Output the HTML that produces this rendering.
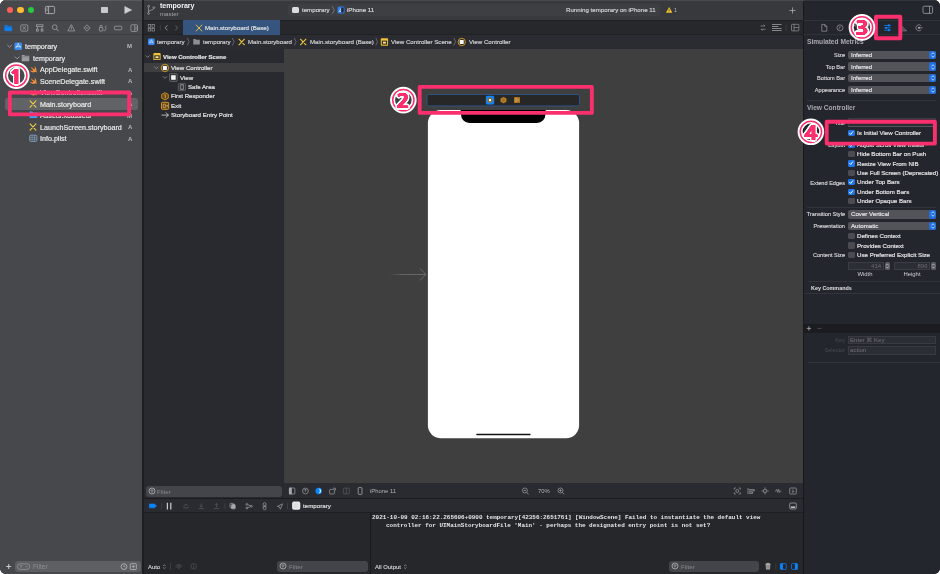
<!DOCTYPE html>
<html lang="en">
<head>
<meta charset="utf-8">
<title>Xcode — Main.storyboard</title>
<style>
*{box-sizing:border-box;margin:0;padding:0}
html,body{width:940px;height:574px;overflow:hidden;background:#fff}
body{font-family:"Liberation Sans","Noto Sans CJK JP",sans-serif;font-size:8px;color:#dfdfdf;position:relative;-webkit-font-smoothing:antialiased}
#win{position:absolute;left:0;top:0;width:940px;height:574px;border-radius:6px;overflow:hidden;background:#26272b}
.abs{position:absolute}
.t{position:absolute;white-space:nowrap;line-height:10px;height:10px;will-change:transform}
/* panes */
#sidebar{left:0;top:0;width:142px;height:574px;background:#47484c}
#sdiv{left:142px;top:0;width:2px;height:574px;background:#1e1e20}
#titlebar{left:144px;top:0;width:660px;height:20px;background:#38393d}
#tabbar{left:144px;top:20px;width:660px;height:15px;background:#27282c}
#jumpbar{left:144px;top:34.800px;width:660px;height:14.200px;background:#2b2c31}
#outline{left:144px;top:49px;width:140.500px;height:434px;background:#292a2f}
#canvas{left:284px;top:49px;width:520px;height:434px;background:#3f3f3f}
#obar{left:144px;top:483px;width:140.500px;height:15px;background:#292a2f}
#cbar{left:284px;top:483px;width:520px;height:15px;background:#2a2b30}
#dbar{left:144px;top:498px;width:660px;height:15px;background:#2a2b30;border-top:1px solid #1c1c1f;border-bottom:1px solid #1f1f22}
#debug{left:144px;top:513px;width:660px;height:61px;background:#26272b}
#ddiv{left:370px;top:513px;width:1px;height:61px;background:#1a1a1d}
#idiv{left:803px;top:0;width:1px;height:574px;background:#17181b}
#insp{left:804px;top:0;width:136px;height:574px;background:#24262d}
</style>
</head>
<body>
<div id="win">
<div id="sidebar" class="abs"></div>
<div id="sdiv" class="abs"></div>
<div id="titlebar" class="abs"></div>
<div id="tabbar" class="abs"></div>
<div id="jumpbar" class="abs"></div>
<div id="outline" class="abs"></div>
<div id="canvas" class="abs"></div>
<div id="obar" class="abs"></div>
<div id="cbar" class="abs"></div>
<div id="dbar" class="abs"></div>
<div id="debug" class="abs"></div>
<div id="ddiv" class="abs"></div>
<div id="idiv" class="abs"></div>
<div id="insp" class="abs"></div>
<!--SIDEBAR-->
<!-- traffic lights + toolbar (sidebar) -->
<div class="abs" style="left:0;top:0;width:142px;height:1px;background:#595a5e"></div>
<div class="abs" style="left:6.700px;top:6.700px;width:6.600px;height:6.600px;border-radius:50%;background:#fe5f57"></div>
<div class="abs" style="left:17.200px;top:6.700px;width:6.600px;height:6.600px;border-radius:50%;background:#febc2e"></div>
<div class="abs" style="left:27.600px;top:6.700px;width:6.600px;height:6.600px;border-radius:50%;background:#28c840"></div>
<svg class="abs" style="left:44px;top:5px" width="12" height="10" viewBox="0 0 12 10"><rect x="1.4" y="1.4" width="9.2" height="7.2" rx="1.2" fill="none" stroke="#bdbdc0" stroke-width="0.8"/><line x1="4.6" y1="1.4" x2="4.6" y2="8.6" stroke="#bdbdc0" stroke-width="0.8"/><line x1="2.4" y1="3" x2="3.7" y2="3" stroke="#bdbdc0" stroke-width="0.6"/><line x1="2.4" y1="4.3" x2="3.7" y2="4.3" stroke="#bdbdc0" stroke-width="0.6"/><line x1="2.4" y1="5.6" x2="3.7" y2="5.6" stroke="#bdbdc0" stroke-width="0.6"/></svg>
<div class="abs" style="left:101px;top:6.8px;width:6.8px;height:6.6px;border-radius:0.8px;background:#c9c9cb"></div>
<svg class="abs" style="left:124px;top:6px" width="9" height="8" viewBox="0 0 9 8"><path d="M0.8 0.5 L7.6 4 L0.8 7.5 Z" fill="#cfcfd1" stroke="#cfcfd1" stroke-width="0.6" stroke-linejoin="round"/></svg>
<div class="abs" style="left:0;top:20px;width:142px;height:1px;background:#3c3d41"></div>
<!-- navigator selector icons -->
<svg class="abs" style="left:0;top:21px" width="142" height="14" viewBox="0 0 142 14" fill="none" stroke="#a9a9ad" stroke-width="0.7">
 <path d="M4.8 4.4 h2.6 l0.8 0.8 h3.6 v4.6 h-7 z" fill="#0a84ff" stroke="#0a84ff" stroke-width="0.5" stroke-linejoin="round"/><rect x="4.8" y="5.7" width="7" height="0.5" fill="#47484c" stroke="none"/>
 <rect x="20.8" y="3.9" width="7" height="6.2" rx="0.8"/><path d="M22.6 5.4 l3.4 3.2 M26 5.4 l-3.4 3.2"/>
 <rect x="36.4" y="3.8" width="6.6" height="1.8" /><rect x="36.4" y="8.2" width="1.9" height="1.9"/><rect x="41.1" y="8.2" width="1.9" height="1.9"/><path d="M37.4 5.6 v2.6 M42 5.6 v2.6"/>
 <circle cx="54.7" cy="6.2" r="2.4"/><path d="M56.5 8 l2 2.1" stroke-width="0.9"/>
 <path d="M71.3 3.6 l3.5 6.3 h-7 z" stroke-linejoin="round"/><path d="M71.3 5.6 v2.2 M71.3 8.5 v0.6" stroke-width="0.8"/>
 <path d="M87 3.8 l3.2 3.2 l-3.2 3.2 l-3.2 -3.2 z" stroke-linejoin="round"/><path d="M85.6 7 h2.8"/>
 <rect x="99.4" y="6.4" width="3.4" height="3.6" rx="0.5"/><path d="M100 6.4 v-1 a1.1 1.1 0 0 1 2.2 0 v1"/><path d="M103.6 9.6 h1.6 l0.6 -0.6 v-4.6" stroke-width="0.6"/>
 <rect x="114.4" y="5.2" width="7.4" height="3.6" rx="0.9"/>
 <rect x="130.9" y="3.8" width="6.6" height="6.6" rx="0.8"/><path d="M134.6 3.8 v6.6 M134.6 6.2 h2.9 M134.6 8.2 h2.9" stroke-width="0.6"/>
</svg>
<div class="abs" style="left:0;top:34px;width:142px;height:1px;background:#3d3e42"></div>
<!-- selected row -->
<div class="abs" style="left:5px;top:98.3px;width:132.6px;height:11.4px;border-radius:2.5px;background:#626367"></div>
<!-- tree -->
<style>
.sb{font-size:7.15px;color:#ececec;-webkit-text-stroke:0.18px #ececec}
.st{font-size:6px;color:#b9b9bc;font-weight:bold}
</style>
<svg class="abs" style="left:0;top:40px" width="142" height="106" viewBox="0 40 142 106" fill="none">
 <path d="M7.6 45.2 l2 2 l2 -2" stroke="#a9a9ad" stroke-width="0.8" stroke-linecap="round" stroke-linejoin="round"/>
 <path d="M15.1 56.9 l2 2 l2 -2" stroke="#a9a9ad" stroke-width="0.8" stroke-linecap="round" stroke-linejoin="round"/>
 <!-- project icon -->
 <rect x="14.4" y="42.4" width="7.6" height="7.6" rx="1.5" fill="#3b8cf0"/>
 <path d="M18.2 43.8 l-2.2 3.9 M18.2 43.8 l2.2 3.9 M16.1 46.6 h4.2" stroke="#dbe9fb" stroke-width="0.7" stroke-linecap="round"/>
 <!-- folder -->
 <path d="M21.7 54.9 h2.6 l0.7 0.8 h4.3 v5.6 h-7.6 z" fill="#9a9ba0"/><rect x="21.7" y="56.6" width="7.6" height="0.5" fill="#6d6e73"/>
 <!-- swift icons -->
 <g fill="#f5943c">
  <path transform="translate(28.410 64.400) scale(0.412)" d="M13.543 3.41c4.114 2.47 6.545 7.162 5.549 11.131-.024.093-.05.181-.076.272l.002.001c2.062 2.538 1.5 5.258 1.236 4.745-1.072-2.086-3.066-1.568-4.088-1.043a6.803 6.803 0 0 1-.281.158l-.02.012-.002.002c-2.115 1.123-4.957 1.205-7.812-.022a12.568 12.568 0 0 1-5.640-4.838c.649.48 1.350.902 2.097 1.252 3.019 1.414 6.051 1.311 8.197-.002C9.651 12.730 7.101 9.670 5.146 7.191a10.628 10.628 0 0 1-1.005-1.384c2.340 2.142 6.038 4.830 7.365 5.576C8.690 8.408 6.208 4.743 6.324 4.860c4.436 4.470 8.528 6.996 8.528 6.996.154.085.270.154.360.213.085-.215.160-.437.224-.668.708-2.588-.090-5.548-1.893-7.992z"/>
  <path transform="translate(28.410 75.900) scale(0.412)" d="M13.543 3.41c4.114 2.47 6.545 7.162 5.549 11.131-.024.093-.05.181-.076.272l.002.001c2.062 2.538 1.5 5.258 1.236 4.745-1.072-2.086-3.066-1.568-4.088-1.043a6.803 6.803 0 0 1-.281.158l-.02.012-.002.002c-2.115 1.123-4.957 1.205-7.812-.022a12.568 12.568 0 0 1-5.640-4.838c.649.48 1.350.902 2.097 1.252 3.019 1.414 6.051 1.311 8.197-.002C9.651 12.730 7.101 9.670 5.146 7.191a10.628 10.628 0 0 1-1.005-1.384c2.340 2.142 6.038 4.830 7.365 5.576C8.690 8.408 6.208 4.743 6.324 4.860c4.436 4.470 8.528 6.996 8.528 6.996.154.085.270.154.360.213.085-.215.160-.437.224-.668.708-2.588-.090-5.548-1.893-7.992z"/>
  <path transform="translate(28.410 87.400) scale(0.412)" d="M13.543 3.41c4.114 2.47 6.545 7.162 5.549 11.131-.024.093-.05.181-.076.272l.002.001c2.062 2.538 1.5 5.258 1.236 4.745-1.072-2.086-3.066-1.568-4.088-1.043a6.803 6.803 0 0 1-.281.158l-.02.012-.002.002c-2.115 1.123-4.957 1.205-7.812-.022a12.568 12.568 0 0 1-5.640-4.838c.649.48 1.350.902 2.097 1.252 3.019 1.414 6.051 1.311 8.197-.002C9.651 12.730 7.101 9.670 5.146 7.191a10.628 10.628 0 0 1-1.005-1.384c2.340 2.142 6.038 4.830 7.365 5.576C8.690 8.408 6.208 4.743 6.324 4.860c4.436 4.470 8.528 6.996 8.528 6.996.154.085.270.154.360.213.085-.215.160-.437.224-.668.708-2.588-.090-5.548-1.893-7.992z"/>
 </g>
 <!-- storyboard icons -->
 <g stroke="#f1cc3b" stroke-width="1.150" stroke-linecap="round">
  <path d="M30.100 100.900 l5.800 6.200 M35.900 100.900 l-5.800 6.200"/>
  <path transform="translate(0 23)" d="M30.100 100.900 l5.800 6.200 M35.900 100.900 l-5.800 6.200"/>
 </g>
 <!-- assets -->
 <path d="M29.6 111.600 h2.600 l0.700 0.800 h4.300 v5.600 h-7.600 z" fill="#3fa2f7"/>
 <!-- plist -->
 <rect x="29.700" y="135.200" width="7.2" height="6.2" rx="0.9" stroke="#8fb4d8" stroke-width="0.7"/><path d="M29.700 137.300 h7.200 M29.700 139.300 h7.200 M32.100 135.200 v6.200 M34.500 135.200 v6.200" stroke="#8fb4d8" stroke-width="0.5"/>
</svg>
<div class="t sb" style="left:25.4px;top:41.8px">temporary</div>
<div class="t sb" style="left:32.6px;top:53.5px">temporary</div>
<div class="t sb" style="left:40px;top:65.0px">AppDelegate.swift</div>
<div class="t sb" style="left:40px;top:76.5px">SceneDelegate.swift</div>
<div class="t sb" style="left:40px;top:88.0px">ViewController.swift</div>
<div class="t sb" style="left:40px;top:99.5px">Main.storyboard</div>
<div class="t sb" style="left:40px;top:111.0px">Assets.xcassets</div>
<div class="t sb" style="left:40px;top:122.5px">LaunchScreen.storyboard</div>
<div class="t sb" style="left:40px;top:134.0px">Info.plist</div>
<div class="t st" style="left:127px;top:41.3px">M</div>
<div class="t st" style="left:127.600px;top:64.5px">A</div>
<div class="t st" style="left:127.600px;top:76.0px">A</div>
<div class="t st" style="left:127.600px;top:87.5px">A</div>
<div class="t st" style="left:127.600px;top:99.0px">A</div>
<div class="t st" style="left:127px;top:110.5px">M</div>
<div class="t st" style="left:127.600px;top:122.0px">A</div>
<div class="t st" style="left:127.600px;top:133.5px">A</div>
<!-- sidebar bottom filter -->
<div class="abs" style="left:14.6px;top:561px;width:126px;height:11px;border-radius:3px;background:#5e5f63"></div>
<svg class="abs" style="left:4px;top:560px" width="138" height="13" viewBox="4 560 138 13" fill="none">
 <path d="M6.200 566.500 h5 M8.700 564 v5" stroke="#d6d6d8" stroke-width="0.9"/>
 <rect x="17.300" y="563.800" width="12.400" height="5.600" rx="2.800" stroke="#9c9ca0" stroke-width="0.7"/>
 <path d="M19.600 565.300 h3 M20.100 566.500 h2 M20.600 567.700 h1" stroke="#9c9ca0" stroke-width="0.5"/><path d="M25.200 566 l1.100 1.100 l1.100 -1.100" stroke="#9c9ca0" stroke-width="0.6"/>
 <circle cx="124" cy="566.600" r="2.900" stroke="#c6c6c9" stroke-width="0.7"/><path d="M124 564.800 v1.900 h1.400" stroke="#c6c6c9" stroke-width="0.6"/>
 <rect x="130.300" y="563.700" width="6" height="5.800" rx="0.800" stroke="#c6c6c9" stroke-width="0.7"/><path d="M131.700 566.600 h3.200 M133.300 565 v3.200" stroke="#c6c6c9" stroke-width="0.6"/>
</svg>
<div class="t" style="left:32.5px;top:561.6px;font-size:6.6px;color:#8f8f93">Filter</div>
<!--/SIDEBAR-->
<!--TOP-->
<style>
.tb{font-size:6.15px;color:#d4d4d6;-webkit-text-stroke:0.18px #d4d4d6}
.jb{font-size:6.15px;color:#cfcfd2;-webkit-text-stroke:0.18px #cfcfd2}
.ol{font-size:6.15px;color:#e2e2e4;-webkit-text-stroke:0.2px #e2e2e4}
</style>
<!-- title bar -->
<div class="abs" style="left:287.500px;top:4px;width:372.500px;height:12.400px;border-radius:3px;background:#3e3f43"></div>
<div class="abs" style="left:144px;top:0;width:660px;height:1px;background:#48494d"></div>
<svg class="abs" style="left:145px;top:3px" width="14" height="14" viewBox="145 3 14 14" fill="none" stroke="#b9b9bd" stroke-width="0.6">
 <circle cx="148.600" cy="6.200" r="0.900"/><circle cx="148.600" cy="13.400" r="0.900"/><circle cx="153.800" cy="7.600" r="0.900"/><path d="M148.600 7.100 v5.400 M153.800 8.500 c0 2 -5.200 1.200 -5.200 3.200"/>
</svg>
<div class="t" style="left:160.3px;top:1.2px;font-size:7.050px;font-weight:bold;color:#f4f4f5">temporary</div>
<div class="t" style="left:160.3px;top:8.9px;font-size:6.100px;color:#a6a6aa">master</div>
<div class="abs" style="left:292px;top:6.600px;width:6.800px;height:6.800px;border-radius:1.500px;background:#dcdcde"></div>
<div class="t tb" style="left:301.8px;top:5px">temporary</div>
<svg class="abs" style="left:331px;top:5px" width="5" height="10" viewBox="0 0 5 10" fill="none" stroke="#8e8e92" stroke-width="0.6"><path d="M1.200 1.200 l2.200 3.800 l-2.200 3.800"/></svg>
<svg class="abs" style="left:336.500px;top:6px" width="8" height="8" viewBox="0 0 8 8"><rect x="0.500" y="0.500" width="7" height="7" rx="1.600" fill="#2f7fe6"/><path d="M2 6 l2.500 -4 M3 6 l3 -3" stroke="#e8f1fd" stroke-width="0.800"/><rect x="4.200" y="1.400" width="2.400" height="5.200" rx="0.500" fill="#1d2433"/></svg>
<div class="t tb" style="left:347px;top:5px">iPhone 11</div>
<div class="t tb" style="left:566px;top:5px;color:#c9c9cc">Running temporary on iPhone 11</div>
<svg class="abs" style="left:666px;top:6.800px" width="6.300" height="6.300" viewBox="0 0 7 7"><path d="M3.500 0.600 l3.100 5.600 h-6.200 z" fill="#f5c52f" stroke="#f5c52f" stroke-width="0.600" stroke-linejoin="round"/><path d="M3.500 2.400 v2 M3.500 5.100 v0.500" stroke="#3a3000" stroke-width="0.700"/></svg>
<div class="t" style="left:674px;top:5px;font-size:5.600px;color:#b5b5b9">1</div>
<svg class="abs" style="left:789px;top:6.500px" width="7" height="7" viewBox="0 0 7 7"><path d="M0.500 3.500 h6 M3.500 0.500 v6" stroke="#b7b7bb" stroke-width="0.700"/></svg>
<!-- tab bar -->
<div class="abs" style="left:144px;top:19.500px;width:660px;height:0.900px;background:#1f2023"></div>
<div class="abs" style="left:144px;top:34.300px;width:660px;height:0.700px;background:#202125"></div>
<svg class="abs" style="left:147px;top:23px" width="34" height="10" viewBox="147 23 34 10" fill="none" stroke="#a2a2a6" stroke-width="0.600">
 <rect x="148.200" y="24.600" width="2.600" height="2.600"/><rect x="152" y="24.600" width="2.600" height="2.600"/><rect x="148.200" y="28.400" width="2.600" height="2.600"/><rect x="152" y="28.400" width="2.600" height="2.600"/>
 <path d="M160.300 25 v5.400" stroke="#4a4b50"/>
 <path d="M167.400 25.300 l-2.200 2.500 l2.200 2.500" stroke="#b5b5b9" stroke-width="0.700"/>
 <path d="M175.400 25.300 l2.200 2.500 l-2.200 2.500" stroke="#737378" stroke-width="0.700"/>
</svg>
<div class="abs" style="left:183px;top:20.200px;width:96.800px;height:14.600px;background:#35557f"></div>
<svg class="abs" style="left:195px;top:24px" width="8" height="8" viewBox="0 0 8 8"><path d="M1.200 1 l5.600 6 M6.800 1 l-5.600 6" stroke="#f1cc3b" stroke-width="0.900" stroke-linecap="round"/></svg>
<div class="t tb" style="left:205px;top:22.800px;color:#f1f1f3">Main.storyboard (Base)</div>
<svg class="abs" style="left:756px;top:22px" width="46" height="11" viewBox="756 22 46 11" fill="none" stroke="#a8a8ac" stroke-width="0.600">
 <path d="M760.500 26 h4.500 l-1.300 -1.300 M765.500 29.300 h-4.500 l1.300 1.300"/>
 <path d="M772 24.500 h9.600 M772 26.500 h6.400 M772 28.500 h9.600 M772 30.500 h9.600" stroke="#8f8f94" stroke-width="0.900"/>
 <path d="M786 24.500 v6.500" stroke="#4a4b50"/>
 <rect x="791.500" y="24.300" width="7.400" height="6.600" rx="0.900"/><path d="M794 24.300 v6.600 M794 27.600 h4.900"/>
</svg>
<!-- jump bar -->
<svg class="abs" style="left:144px;top:36px" width="380" height="12" viewBox="144 36 380 12" fill="none">
 <rect x="148" y="38.400" width="6.600" height="6.600" rx="1.300" fill="#3b8cf0"/><path d="M151.300 39.700 l-1.800 3.300 M151.300 39.700 l1.800 3.300 M149.600 42.200 h3.400" stroke="#dbe9fb" stroke-width="0.600"/>
 <g stroke="#8a8a8f" stroke-width="0.600"><path d="M187.300 38 l1.800 3.700 l-1.800 3.700"/><path transform="translate(45 0)" d="M187.300 38 l1.800 3.700 l-1.800 3.700"/><path transform="translate(107 0)" d="M187.300 38 l1.800 3.700 l-1.800 3.700"/><path transform="translate(188.500 0)" d="M187.300 38 l1.800 3.700 l-1.800 3.700"/><path transform="translate(266.500 0)" d="M187.300 38 l1.800 3.700 l-1.800 3.700"/></g>
 <path d="M193.300 39 h2.200 l0.600 0.700 h3.700 v4.900 h-6.500 z" fill="#8e8f94"/>
 <g stroke="#f1cc3b" stroke-width="1.050" stroke-linecap="round"><path d="M239 39.200 l5.400 5.600 M244.400 39.200 l-5.400 5.600"/><path transform="translate(61.500 0)" d="M239 39.200 l5.400 5.600 M244.400 39.200 l-5.400 5.600"/></g>
 <rect x="380.800" y="38.200" width="7.300" height="7.500" rx="0.900" fill="#f1c33a"/><rect x="381.800" y="40.600" width="5.300" height="4.100" fill="#3a3320"/><rect x="383" y="41.700" width="2.900" height="1.900" fill="#f7e3a0"/>
 <circle cx="461.700" cy="42" r="3.700" fill="#2a2b30" stroke="#d9a01f" stroke-width="0.900"/><rect x="459.700" y="40" width="4" height="4" rx="0.400" fill="#fafafa"/>
</svg>
<div class="t jb" style="left:157.300px;top:37.200px">temporary</div>
<div class="t jb" style="left:202.600px;top:37.200px">temporary</div>
<div class="t jb" style="left:247.800px;top:37.200px">Main.storyboard</div>
<div class="t jb" style="left:309.800px;top:37.200px">Main.storyboard (Base)</div>
<div class="t jb" style="left:391px;top:37.200px">View Controller Scene</div>
<div class="t jb" style="left:468.800px;top:37.200px">View Controller</div>
<!--/TOP-->
<!--OUTLINE-->
<!-- outline -->
<div class="abs" style="left:144px;top:63.300px;width:140px;height:9.200px;background:#3e3e41"></div>
<svg class="abs" style="left:144px;top:50px" width="140" height="72" viewBox="144 50 140 72" fill="none">
 <g stroke="#9b9ba0" stroke-width="0.750" stroke-linecap="round" stroke-linejoin="round">
  <path d="M146 55.700 l1.700 1.700 l1.700 -1.700"/><path d="M154.600 67 l1.700 1.700 l1.700 -1.700"/><path d="M163.300 76.600 l1.700 1.700 l1.700 -1.700"/>
 </g>
 <rect x="153.400" y="53.100" width="7.200" height="7" rx="0.900" fill="#f1c33a"/><rect x="154.300" y="55.300" width="5.400" height="3.900" fill="#3a3320"/><rect x="155.500" y="56.300" width="3" height="1.900" fill="#f7e3a0"/>
 <circle cx="164.900" cy="67.900" r="3.700" fill="#3e3e41" stroke="#d9a01f" stroke-width="0.900"/><rect x="162.900" y="65.900" width="4" height="4" rx="0.400" fill="#fafafa"/>
 <rect x="169.600" y="73.700" width="7.600" height="7.600" rx="0.700" stroke="#8f8f94" stroke-width="0.600"/><rect x="171.100" y="75.200" width="4.600" height="4.600" fill="#f4f4f4"/>
 <rect x="178.300" y="83.400" width="7.200" height="7.200" rx="0.800" stroke="#77787d" stroke-width="0.600"/><rect x="180.200" y="84.500" width="3.400" height="5" rx="0.500" stroke="#b9b9bd" stroke-width="0.600"/><path d="M180.200 85.800 h3.400 M180.200 88.200 h3.400" stroke="#b9b9bd" stroke-width="0.400"/>
 <path d="M161.700 94.400 l3.300 -1.700 l3.300 1.700 v3.800 l-3.300 1.700 l-3.300 -1.700 z" fill="#6a4610" stroke="#e3a12c" stroke-width="0.800" stroke-linejoin="round"/><path d="M164.300 94.800 h1 v3.400" stroke="#f0c878" stroke-width="0.700"/>
 <rect x="161.500" y="102.300" width="7.200" height="7" rx="0.900" fill="#6a4610" stroke="#e3a12c" stroke-width="0.900"/><path d="M163.300 104.200 h2 v3.300 h-2 z" stroke="#f3d9a4" stroke-width="0.500"/><path d="M165.600 105.800 h2 M166.900 104.900 l0.900 0.900 l-0.900 0.900" stroke="#f3d9a4" stroke-width="0.500"/>
 <path d="M161.900 115.100 h6.400 M166 112.800 l2.400 2.300 l-2.400 2.300" stroke="#dcdcdf" stroke-width="0.800" stroke-linecap="round" stroke-linejoin="round"/>
</svg>
<div class="t ol" style="left:163px;top:51.700px;font-size:6px;font-weight:bold;color:#e4e4e6">View Controller Scene</div>
<div class="t ol" style="left:171px;top:63px">View Controller</div>
<div class="t ol" style="left:179.600px;top:72.600px">View</div>
<div class="t ol" style="left:187.700px;top:82.100px">Safe Area</div>
<div class="t ol" style="left:171px;top:91.400px">First Responder</div>
<div class="t ol" style="left:171px;top:100.800px">Exit</div>
<div class="t ol" style="left:171px;top:110.100px">Storyboard Entry Point</div>
<!-- outline filter -->
<div class="abs" style="left:145.600px;top:486px;width:136px;height:10.600px;border-radius:3px;background:#44454a"></div>
<svg class="abs" style="left:147.600px;top:487.400px" width="8" height="8" viewBox="0 0 8 8" fill="none"><circle cx="4" cy="4" r="3" stroke="#cdcdd0" stroke-width="0.650"/><path d="M2.400 3 h3.200 M2.900 4.100 h2.200 M3.500 5.200 h1" stroke="#cdcdd0" stroke-width="0.550"/></svg>
<div class="t" style="left:157px;top:486.500px;font-size:6.200px;color:#8a8a8f">Filter</div>
<!--/OUTLINE-->
<!--CANVAS-->
<!-- canvas -->
<svg class="abs" style="left:284px;top:49px" width="520" height="434" viewBox="284 49 520 434" fill="none">
 <!-- entry arrow -->
 <linearGradient id="ag" x1="389" y1="0" x2="426" y2="0" gradientUnits="userSpaceOnUse"><stop offset="0" stop-color="#3f3f3f"/><stop offset="0.350" stop-color="#6a6a6c"/><stop offset="1" stop-color="#767678"/></linearGradient>
 <rect x="389" y="274" width="37" height="0.800" fill="url(#ag)"/><path d="M419.800 268.400 l6.200 6 l-6.200 6" stroke="#737375" stroke-width="0.800"/>
 <!-- phone -->
 <rect x="427.900" y="110.100" width="151.200" height="328.100" rx="13" fill="#ffffff"/>
 <path d="M459.800 110.100 h86.800 a1.200 1.200 0 0 0 -1.200 1.200 v3.200 a8.400 8.400 0 0 1 -8.400 8.400 h-67.600 a8.400 8.400 0 0 1 -8.400 -8.400 v-3.200 a1.200 1.200 0 0 0 -1.200 -1.200 z" fill="#000"/>
 <rect x="476.200" y="433.700" width="54.400" height="1.500" rx="0.750" fill="#111"/>
 <!-- scene dock -->
 <rect x="427.100" y="94.500" width="152.300" height="11.400" rx="1.500" fill="#272728" stroke="#2c5b96" stroke-width="0.800"/>
 <rect x="485.800" y="95.800" width="8.400" height="8.700" rx="1.600" fill="#0a84ff"/>
 <circle cx="490" cy="100.150" r="2.500" fill="#6f5a1e" stroke="#a78a2e" stroke-width="0.600"/><rect x="488.900" y="99.050" width="2.200" height="2.200" rx="0.300" fill="#fff"/>
 <path d="M500.800 98.600 l2.700 -1.400 l2.700 1.400 v3.100 l-2.700 1.400 l-2.700 -1.400 z" fill="#b87f26" stroke="#c98c2b" stroke-width="0.400"/><path d="M502.600 99.300 h1.800 v1.800 h-1.800 z" stroke="#7a5316" stroke-width="0.400"/>
 <rect x="514" y="97.100" width="6" height="6" rx="0.600" fill="#a9711f"/><path d="M515.300 98.600 h1.500 v3 h-1.500 z M517.300 100.100 h1.800 M518.300 99.300 l0.800 0.800 l-0.800 0.800" stroke="#e3c48e" stroke-width="0.450"/>
</svg>
<!--/CANVAS-->
<!--BOTTOM-->
<!-- canvas bottom bar -->
<svg class="abs" style="left:284px;top:484px" width="520" height="14" viewBox="284 484 520 14" fill="none" stroke="#a9a9ad" stroke-width="0.650">
 <rect x="289.300" y="488" width="5.600" height="6" rx="0.800"/><rect x="289.300" y="488" width="2.200" height="6" fill="#a9a9ad"/>
 <circle cx="305.400" cy="491" r="2.900"/><path d="M305.400 489.200 v2.600 M304.200 490.300 l1.200 -1.200 l1.200 1.200" stroke-width="0.600"/>
 <circle cx="318.700" cy="491" r="3" fill="#0a84ff" stroke="#0a84ff"/><path d="M318.700 488.600 a2.400 2.400 0 0 1 0 4.800 a3.400 3.400 0 0 0 0 -4.800 z" fill="#e7f1ff" stroke="none"/>
 <rect x="329.600" y="489.400" width="4.800" height="4.600" rx="0.700"/><path d="M333.200 488.200 h2.200 v2.200" />
 <rect x="343.300" y="488.100" width="6" height="5.800" rx="0.800" stroke="#5d5e63"/><path d="M346.300 488.100 v5.800" stroke="#5d5e63"/>
 <rect x="358.200" y="487.600" width="3.800" height="6.800" rx="0.800" stroke="#c4c4c7"/>
 <circle cx="524.900" cy="490.500" r="2.500"/><path d="M526.700 492.400 l1.900 2 M523.700 490.500 h2.400" stroke-width="0.700"/>
 <circle cx="560.500" cy="490.500" r="2.500"/><path d="M562.300 492.400 l1.900 2 M559.300 490.500 h2.400 M560.500 489.300 v2.400" stroke-width="0.700"/>
 <circle cx="737.300" cy="491" r="1.500"/><path d="M734.300 489.500 v-1.500 h1.500 M738.800 488 h1.500 v1.500 M740.300 492.500 v1.500 h-1.500 M735.800 494 h-1.500 v-1.500"/>
 <path d="M748 488 v6.200 M749 489.600 h5.400 v1.400 h-5.400 M749 492 h3.600 v1.400 h-3.600"/>
 <rect x="763.700" y="489.700" width="2.600" height="2.600"/><path d="M765 487.400 v1.500 M765 493.100 v1.500 M761.400 491 h1.500 M767.100 491 h1.500"/>
 <path d="M775 491 h1 l0.900 -1.700 l0.900 3.200 l0.900 -3.200 l0.900 3.200 l0.900 -1.500 h1" stroke-width="0.550"/>
 <rect x="789.700" y="488" width="6.600" height="6" rx="0.800"/><path d="M793 489.300 v3 M791.700 491.100 l1.300 1.300 l1.300 -1.300" stroke-width="0.600"/>
</svg>
<div class="t" style="left:370.300px;top:486px;font-size:5.900px;color:#b0b0b4">iPhone 11</div>
<div class="t" style="left:537.600px;top:486px;font-size:5.900px;color:#b0b0b4">70%</div>
<!-- debug bar -->
<svg class="abs" style="left:144px;top:499px" width="660" height="14" viewBox="144 499 660 14" fill="none" stroke="#a9a9ad" stroke-width="0.650">
 <path d="M149.400 504 h5 l2.100 1.900 l-2.100 1.900 h-5 z" fill="#0a84ff" stroke="#0a84ff" stroke-linejoin="round"/>
 <path d="M167.400 502.700 v6.800 M170.800 502.700 v6.800" stroke="#c9c9cc" stroke-width="1.250"/>
 <path d="M183.300 507.800 h5.400 M183.600 506 l2.400 -1.800 l2.400 1.800" stroke="#5f6065"/>
 <path d="M198.500 508.600 h5.400 M201.200 503.400 v3.600 M199.900 505.800 l1.300 1.300 l1.300 -1.300" stroke="#5f6065"/>
 <path d="M213.800 508.600 h5.400 M216.500 507.400 v-3.800 M215.200 504.800 l1.300 -1.300 l1.300 1.300" stroke="#5f6065"/>
 <rect x="230" y="503.400" width="3.800" height="4.200" rx="0.600"/><rect x="231.400" y="504.600" width="3.800" height="4.200" rx="0.600" fill="#a9a9ad"/>
 <circle cx="246.800" cy="504.400" r="0.900"/><circle cx="246.800" cy="508" r="0.900"/><circle cx="251.400" cy="506.200" r="0.900"/><path d="M247.700 504.600 l2.800 1.300 M247.700 507.800 l2.800 -1.300"/>
 <circle cx="264.600" cy="504.200" r="1.500"/><circle cx="264.600" cy="508.200" r="1.500"/><path d="M262.600 506.200 h4"/>
 <path d="M277.400 506.400 l5.200 -2.600 l-2.200 5.400 l-0.900 -2.200 z" stroke-linejoin="round"/>
 <path d="M287.500 503.200 v6 M161.700 503.200 v6 M225 503.200 v6" stroke="#47484d"/>
 <rect x="292.100" y="501.600" width="8.200" height="8.200" rx="1.800" fill="#e6e6e8" stroke="none"/><path d="M294 504.300 h4.400 M294 505.700 h4.400 M294 507.100 h4.400 M295.500 503 v5.400 M296.900 503 v5.400" stroke="#cfcfd2" stroke-width="0.300"/>
 <rect x="789.700" y="503" width="6.600" height="6" rx="1" stroke="#bdbdc1"/><rect x="790.800" y="506.400" width="4.400" height="1.600" fill="#bdbdc1" stroke="none"/>
</svg>
<div class="t" style="left:302.900px;top:500.900px;font-size:6.200px;color:#e2e2e4;-webkit-text-stroke:0.15px #e2e2e4">temporary</div>
<!-- console -->
<div class="t" style="left:371.800px;top:513.200px;font-family:'Liberation Mono',monospace;font-weight:bold;font-size:5.940px;color:#e6e6e8">2021-10-09 02:16:22.265606+0900 temporary[42356:2651761] [WindowScene] Failed to instantiate the default view</div>
<div class="t" style="left:385.800px;top:520.900px;font-family:'Liberation Mono',monospace;font-weight:bold;font-size:5.940px;color:#e6e6e8">controller for UIMainStoryboardFile 'Main' - perhaps the designated entry point is not set?</div>
<!-- debug bottom -->
<div class="t" style="left:147.600px;top:561.600px;font-size:5.900px;color:#d0d0d3;-webkit-text-stroke:0.15px #d0d0d3">Auto</div>
<svg class="abs" style="left:161.600px;top:563px" width="5" height="8" viewBox="0 0 5 8" fill="none" stroke="#c4c4c8" stroke-width="0.600"><path d="M1.200 2.900 l1.100 -1.100 l1.100 1.100 M1.200 4.500 l1.100 1.100 l1.100 -1.100"/></svg>
<div class="abs" style="left:169.500px;top:563px;width:0.600px;height:7px;background:#3d3e43"></div>
<svg class="abs" style="left:174px;top:562px" width="26" height="9" viewBox="174 562 26 9" fill="none" stroke="#595a5f" stroke-width="0.600">
 <path d="M175.800 566.300 c1.600 -2.400 4.400 -2.400 6 0 c-1.600 2.400 -4.400 2.400 -6 0 z"/><circle cx="178.800" cy="566.300" r="0.900"/>
 <circle cx="193.600" cy="566.300" r="2.700"/><path d="M193.600 565.800 v2 M193.600 564.600 v0.500" stroke-width="0.700"/>
</svg>
<div class="abs" style="left:277.300px;top:561px;width:90.400px;height:10.800px;border-radius:3px;background:#44454a"></div>
<svg class="abs" style="left:279.300px;top:562.400px" width="8" height="8" viewBox="0 0 8 8" fill="none"><circle cx="4" cy="4" r="3" stroke="#cdcdd0" stroke-width="0.650"/><path d="M2.400 3 h3.200 M2.900 4.100 h2.200 M3.500 5.200 h1" stroke="#cdcdd0" stroke-width="0.550"/></svg>
<div class="t" style="left:289px;top:561.500px;font-size:6.200px;color:#8a8a8f">Filter</div>
<div class="t" style="left:374.900px;top:561.600px;font-size:5.900px;color:#d0d0d3;-webkit-text-stroke:0.15px #d0d0d3">All Output</div>
<svg class="abs" style="left:402.600px;top:563px" width="5" height="8" viewBox="0 0 5 8" fill="none" stroke="#c4c4c8" stroke-width="0.600"><path d="M1.200 2.900 l1.100 -1.100 l1.100 1.100 M1.200 4.500 l1.100 1.100 l1.100 -1.100"/></svg>
<div class="abs" style="left:669.400px;top:561px;width:89.400px;height:10.800px;border-radius:3px;background:#44454a"></div>
<svg class="abs" style="left:671.300px;top:562.400px" width="8" height="8" viewBox="0 0 8 8" fill="none"><circle cx="4" cy="4" r="3" stroke="#cdcdd0" stroke-width="0.650"/><path d="M2.400 3 h3.200 M2.900 4.100 h2.200 M3.500 5.200 h1" stroke="#cdcdd0" stroke-width="0.550"/></svg>
<div class="t" style="left:681px;top:561.500px;font-size:6.200px;color:#8a8a8f">Filter</div>
<svg class="abs" style="left:762px;top:561px" width="40" height="12" viewBox="762 561 40 12" fill="none">
 <path d="M765.400 564.200 h5.200 M766.800 564.200 v-0.900 h2.400 v0.900 M766 564.200 l0.400 5 h3.200 l0.400 -5 z" stroke="#bcbcc0" stroke-width="0.600" fill="#8d8d91"/>
 <path d="M775.800 563.200 v6.600" stroke="#47484d" stroke-width="0.600"/>
 <rect x="780.300" y="563.600" width="6" height="5.800" rx="0.900" stroke="#0a84ff" stroke-width="0.700"/><rect x="780.300" y="563.600" width="2.600" height="5.800" fill="#0a84ff"/>
 <rect x="791.500" y="563.600" width="6" height="5.800" rx="0.900" stroke="#0a84ff" stroke-width="0.700"/><rect x="794.900" y="563.600" width="2.600" height="5.800" fill="#0a84ff"/>
</svg>
<!--/BOTTOM-->
<!--INSPECTOR-->
<style>
.il{font-size:5.600px;color:#d6d6d9;text-align:right;width:60px;-webkit-text-stroke:0.15px #d6d6d9}
.iv{font-size:6.150px;color:#e4e4e6;-webkit-text-stroke:0.18px #e4e4e6}
.ih{font-size:6.620px;font-weight:bold;color:#a9aab0}
.sel{position:absolute;left:848px;width:87.800px;height:8.600px;border-radius:2px;background:#53545a}
.sel i{position:absolute;right:0;top:0;width:6.500px;height:8.600px;border-radius:2px;background:#1f6fe0}
.cb{position:absolute;left:848.400px;width:6.300px;height:6.300px;border-radius:1.400px;background:#4b4c52}
.cb.on{background:#1f76ea}
.sep{position:absolute;left:807.400px;width:128.200px;height:1px;background:#32343b}
</style>
<svg class="abs" style="left:921px;top:5px" width="14" height="10" viewBox="921 5 14 10" fill="none" stroke="#b5b5b9" stroke-width="0.700"><rect x="923" y="6.200" width="9.600" height="7.200" rx="1.200"/><path d="M929.600 6.200 v7.200"/></svg>
<div class="abs" style="left:804px;top:0;width:136px;height:1px;background:#33353c"></div>
<div class="abs" style="left:804px;top:19.700px;width:136px;height:0.800px;background:#30323a"></div>
<div class="abs" style="left:804px;top:34.300px;width:136px;height:0.800px;background:#30323a"></div>
<svg class="abs" style="left:815px;top:21px" width="115" height="14" viewBox="815 21 115 14" fill="none" stroke="#a4a4a9" stroke-width="0.650">
 <path d="M821.800 24.400 h3 l2 2 v4.800 h-5 z M824.800 24.400 v2 h2"/>
 <circle cx="840" cy="27.800" r="3"/><path d="M840 25.900 v2 l-1.500 1"/>
 <rect x="868.800" y="24.800" width="6.600" height="6" rx="0.800"/><rect x="870" y="26.200" width="2" height="2" fill="#a4a4a9" stroke="none"/><path d="M870 29.500 h4.200"/>
 <circle cx="856.200" cy="27.800" r="3"/><path d="M856.500 29.800 v0.300 M855.500 26.700 a1 1 0 1 1 1.400 1 l-0.400 0.500"/>
 <g stroke="#0a84ff" stroke-width="0.800"><path d="M884.300 25.400 h6.600 M884.300 27.800 h6.600 M884.300 30.200 h6.600"/></g>
 <g fill="#0a84ff" stroke="none"><circle cx="888.800" cy="25.400" r="1.100"/><circle cx="886.200" cy="27.800" r="1.100"/><circle cx="888.800" cy="30.200" r="1.100"/></g>
 <path d="M900.600 30.800 l5.800 0 l-5.800 -5.800 z" /><path d="M902 29.400 h1.600 l-1.600 -1.600 z" stroke-width="0.400"/>
 <path d="M921.100 25.700 a3 3 0 1 0 0 4.200"/><circle cx="919" cy="27.800" r="1.100" fill="#a4a4a9" stroke="none"/><path d="M919 27.800 h3.600" stroke-width="0.700"/>
</svg>
<div class="t ih" style="left:807.200px;top:36.700px">Simulated Metrics</div>
<div class="t il" style="left:785.200px;top:50.1px">Size</div>
<div class="sel" style="top:50.7px"><i></i></div>
<svg class="abs" style="left:929.500px;top:51.0px" width="6" height="8" viewBox="0 0 6 8" fill="none" stroke="#fff" stroke-width="0.700" stroke-linecap="round" stroke-linejoin="round"><path d="M1.700 3.100 l1.300 -1.400 l1.300 1.400 M1.700 4.900 l1.300 1.400 l1.300 -1.400"/></svg>
<div class="t iv" style="left:851px;top:50.0px">Inferred</div>
<div class="t il" style="left:785.200px;top:61.7px">Top Bar</div>
<div class="sel" style="top:62.3px"><i></i></div>
<svg class="abs" style="left:929.500px;top:62.6px" width="6" height="8" viewBox="0 0 6 8" fill="none" stroke="#fff" stroke-width="0.700" stroke-linecap="round" stroke-linejoin="round"><path d="M1.700 3.100 l1.300 -1.400 l1.300 1.400 M1.700 4.900 l1.300 1.400 l1.300 -1.400"/></svg>
<div class="t iv" style="left:851px;top:61.6px">Inferred</div>
<div class="t il" style="left:785.200px;top:73.3px">Bottom Bar</div>
<div class="sel" style="top:73.9px"><i></i></div>
<svg class="abs" style="left:929.500px;top:74.2px" width="6" height="8" viewBox="0 0 6 8" fill="none" stroke="#fff" stroke-width="0.700" stroke-linecap="round" stroke-linejoin="round"><path d="M1.700 3.100 l1.300 -1.400 l1.300 1.400 M1.700 4.900 l1.300 1.400 l1.300 -1.400"/></svg>
<div class="t iv" style="left:851px;top:73.2px">Inferred</div>
<div class="t il" style="left:785.200px;top:84.9px">Appearance</div>
<div class="sel" style="top:85.5px"><i></i></div>
<svg class="abs" style="left:929.500px;top:85.8px" width="6" height="8" viewBox="0 0 6 8" fill="none" stroke="#fff" stroke-width="0.700" stroke-linecap="round" stroke-linejoin="round"><path d="M1.700 3.100 l1.300 -1.400 l1.300 1.400 M1.700 4.900 l1.300 1.400 l1.300 -1.400"/></svg>
<div class="t iv" style="left:851px;top:84.8px">Inferred</div>
<div class="sep" style="top:100px"></div>
<div class="t ih" style="left:807.200px;top:102.900px">View Controller</div>
<div class="t il" style="left:785.200px;top:117.6px">Title</div>
<div class="abs" style="left:848px;top:118.400px;width:88.300px;height:8.400px;background:#2b2d34;border:1px solid #3a3c43;border-bottom-color:#55575e"></div>
<div class="cb on" style="top:129.5px"></div>
<svg class="abs" style="left:848.400px;top:129.5px" width="6.300" height="6.300" viewBox="0 0 6 6" fill="none" stroke="#fff" stroke-width="0.900" stroke-linecap="round" stroke-linejoin="round"><path d="M1.500 3.100 l1.100 1.200 l1.900 -2.600"/></svg>
<div class="t iv" style="left:856.800px;top:127.7px">Is Initial View Controller</div>
<div class="t il" style="left:785.200px;top:140.1px">Layout</div>
<div class="cb on" style="top:141.8px"></div>
<svg class="abs" style="left:848.400px;top:141.8px" width="6.300" height="6.300" viewBox="0 0 6 6" fill="none" stroke="#fff" stroke-width="0.900" stroke-linecap="round" stroke-linejoin="round"><path d="M1.500 3.100 l1.100 1.200 l1.900 -2.600"/></svg>
<div class="t iv" style="left:856.800px;top:140.0px">Adjust Scroll View Insets</div>
<div class="cb" style="top:151.0px"></div>
<div class="t iv" style="left:856.800px;top:149.2px">Hide Bottom Bar on Push</div>
<div class="cb on" style="top:160.4px"></div>
<svg class="abs" style="left:848.400px;top:160.4px" width="6.300" height="6.300" viewBox="0 0 6 6" fill="none" stroke="#fff" stroke-width="0.900" stroke-linecap="round" stroke-linejoin="round"><path d="M1.500 3.100 l1.100 1.200 l1.900 -2.600"/></svg>
<div class="t iv" style="left:856.800px;top:158.6px">Resize View From NIB</div>
<div class="cb" style="top:169.6px"></div>
<div class="t iv" style="left:856.800px;top:167.8px">Use Full Screen (Deprecated)</div>
<div class="t il" style="left:785.200px;top:177.5px">Extend Edges</div>
<div class="cb on" style="top:179.2px"></div>
<svg class="abs" style="left:848.400px;top:179.2px" width="6.300" height="6.300" viewBox="0 0 6 6" fill="none" stroke="#fff" stroke-width="0.900" stroke-linecap="round" stroke-linejoin="round"><path d="M1.500 3.100 l1.100 1.200 l1.900 -2.600"/></svg>
<div class="t iv" style="left:856.800px;top:177.4px">Under Top Bars</div>
<div class="cb on" style="top:188.5px"></div>
<svg class="abs" style="left:848.400px;top:188.5px" width="6.300" height="6.300" viewBox="0 0 6 6" fill="none" stroke="#fff" stroke-width="0.900" stroke-linecap="round" stroke-linejoin="round"><path d="M1.500 3.100 l1.100 1.200 l1.900 -2.600"/></svg>
<div class="t iv" style="left:856.800px;top:186.7px">Under Bottom Bars</div>
<div class="cb" style="top:197.9px"></div>
<div class="t iv" style="left:856.800px;top:196.1px">Under Opaque Bars</div>
<div class="sep" style="top:207px"></div>
<div class="t il" style="left:785.200px;top:209.4px">Transition Style</div>
<div class="sel" style="top:210.0px"><i></i></div>
<svg class="abs" style="left:929.500px;top:210.3px" width="6" height="8" viewBox="0 0 6 8" fill="none" stroke="#fff" stroke-width="0.700" stroke-linecap="round" stroke-linejoin="round"><path d="M1.700 3.100 l1.300 -1.400 l1.300 1.400 M1.700 4.900 l1.300 1.400 l1.300 -1.400"/></svg>
<div class="t iv" style="left:851px;top:209.3px">Cover Vertical</div>
<div class="t il" style="left:785.200px;top:221.1px">Presentation</div>
<div class="sel" style="top:221.7px"><i></i></div>
<svg class="abs" style="left:929.500px;top:222.0px" width="6" height="8" viewBox="0 0 6 8" fill="none" stroke="#fff" stroke-width="0.700" stroke-linecap="round" stroke-linejoin="round"><path d="M1.700 3.100 l1.300 -1.400 l1.300 1.400 M1.700 4.900 l1.300 1.400 l1.300 -1.400"/></svg>
<div class="t iv" style="left:851px;top:221.0px">Automatic</div>
<div class="cb" style="top:233.0px"></div>
<div class="t iv" style="left:856.800px;top:231.2px">Defines Context</div>
<div class="cb" style="top:242.4px"></div>
<div class="t iv" style="left:856.800px;top:240.6px">Provides Context</div>
<div class="t il" style="left:785.200px;top:250.2px">Content Size</div>
<div class="cb" style="top:251.9px"></div>
<div class="t iv" style="left:856.800px;top:250.1px">Use Preferred Explicit Size</div>
<div class="abs" style="left:848.2px;top:262px;width:35.6px;height:8px;background:#2c2e35;border:1px solid #3b3d44"></div>
<div class="t" style="left:848.2px;top:261px;width:33.1px;text-align:right;font-size:6px;color:#6d6e74">414</div>
<div class="abs" style="left:884.8px;top:262px;width:4.800px;height:8px;border-radius:1.500px;background:#5a5b61"></div>
<svg class="abs" style="left:884.8px;top:262px" width="4.800" height="8" viewBox="0 0 4.800 8" fill="none" stroke="#e9e9eb" stroke-width="0.600" stroke-linecap="round" stroke-linejoin="round"><path d="M1.300 3.100 l1.100 -1.200 l1.100 1.200 M1.300 4.900 l1.100 1.200 l1.100 -1.200"/></svg>
<div class="abs" style="left:894.0px;top:262px;width:36.0px;height:8px;background:#2c2e35;border:1px solid #3b3d44"></div>
<div class="t" style="left:894.0px;top:261px;width:33.5px;text-align:right;font-size:6px;color:#6d6e74">896</div>
<div class="abs" style="left:931.0px;top:262px;width:4.800px;height:8px;border-radius:1.500px;background:#5a5b61"></div>
<svg class="abs" style="left:931.0px;top:262px" width="4.800" height="8" viewBox="0 0 4.800 8" fill="none" stroke="#e9e9eb" stroke-width="0.600" stroke-linecap="round" stroke-linejoin="round"><path d="M1.300 3.100 l1.100 -1.200 l1.100 1.200 M1.300 4.900 l1.100 1.200 l1.100 -1.200"/></svg>
<div class="t" style="left:845.400px;top:268.800px;width:40px;text-align:center;font-size:5.900px;color:#d0d0d3">Width</div>
<div class="t" style="left:891.600px;top:268.800px;width:40px;text-align:center;font-size:5.900px;color:#d0d0d3">Height</div>
<div class="sep" style="top:281px;left:808px;width:132px"></div>
<div class="t" style="left:811px;top:283px;font-size:5.400px;font-weight:bold;color:#e0e0e3">Key Commands</div>
<div class="sep" style="top:293.100px;left:804px;width:136px"></div>
<div class="abs" style="left:804px;top:324px;width:136px;height:8.700px;background:#1b1c20"></div>
<svg class="abs" style="left:806px;top:325px" width="18" height="7" viewBox="806 325 18 7" fill="none"><path d="M806.700 328.400 h4.400 M808.900 326.200 v4.400" stroke="#bfbfc3" stroke-width="0.700"/><path d="M817.400 328.400 h4.200" stroke="#5b5c62" stroke-width="0.700"/></svg>
<div class="t il" style="left:785.200px;top:335.1px;color:#4a4c53;-webkit-text-stroke:0">Key</div>
<div class="t il" style="left:785.200px;top:345.4px;color:#4a4c53;-webkit-text-stroke:0">Selector</div>
<div class="abs" style="left:848.200px;top:336px;width:88px;height:8.200px;background:#2c2e35;border:1px solid #393b42"></div>
<div class="t" style="left:849.900px;top:335px;font-size:6.100px;font-family:'Liberation Sans','DejaVu Sans',sans-serif;color:#72737a">Enter ⌘ Key</div>
<div class="abs" style="left:848.200px;top:346.400px;width:88px;height:8.200px;background:#2c2e35;border:1px solid #393b42"></div>
<div class="t" style="left:849.900px;top:345.400px;font-size:6.100px;color:#72737a">action</div>
<div class="sep" style="top:362px;left:808px;width:132px"></div>
<!--/INSPECTOR-->
<!--ANNOT-->
<!-- annotations -->
<style>.dg{font-family:"NanumGothic","Liberation Sans",sans-serif;font-weight:800;font-size:19.500px;line-height:24px;height:24px;width:24px;text-align:center;color:#f92f6e;transform:scaleX(1.130);text-shadow:0.30px 0.00px 0 #f92f6e,0.21px 0.21px 0 #f92f6e,0.00px 0.30px 0 #f92f6e,-0.21px 0.21px 0 #f92f6e,-0.30px 0.00px 0 #f92f6e,-0.21px -0.21px 0 #f92f6e,-0.00px -0.30px 0 #f92f6e,0.21px -0.21px 0 #f92f6e,0.88px 0.00px 0 #fff,0.63px 0.71px 0 #fff,0.00px 1.00px 0 #fff,-0.63px 0.71px 0 #fff,-0.88px 0.00px 0 #fff,-0.63px -0.71px 0 #fff,-0.00px -1.00px 0 #fff,0.63px -0.71px 0 #fff,1.59px 0.00px 0 #fff,1.51px 0.56px 0 #fff,1.29px 1.06px 0 #fff,0.94px 1.46px 0 #fff,0.49px 1.71px 0 #fff,0.00px 1.80px 0 #fff,-0.49px 1.71px 0 #fff,-0.94px 1.46px 0 #fff,-1.29px 1.06px 0 #fff,-1.51px 0.56px 0 #fff,-1.59px 0.00px 0 #fff,-1.51px -0.56px 0 #fff,-1.29px -1.06px 0 #fff,-0.94px -1.46px 0 #fff,-0.49px -1.71px 0 #fff,-0.00px -1.80px 0 #fff,0.49px -1.71px 0 #fff,0.94px -1.46px 0 #fff,1.29px -1.06px 0 #fff,1.51px -0.56px 0 #fff}</style>
<svg class="abs" style="left:0;top:0" width="940" height="574" viewBox="0 0 940 574" fill="none">
 <g stroke="#f92f6e" stroke-width="3.900" stroke-linejoin="round">
  <rect x="9.850" y="92.500" width="119.300" height="21.850"/>
  <rect x="419.700" y="86.900" width="172.150" height="26"/>
  <rect x="875.950" y="16.700" width="24.350" height="21.600"/>
  <rect x="826.700" y="121.700" width="108.200" height="21.900"/>
 </g>
 <g>
  <circle cx="16.300" cy="75.600" r="10.800" stroke="#fff" stroke-width="5"/>
  <circle cx="16.300" cy="75.600" r="10.650" stroke="#f92f6e" stroke-width="1.500"/>
 </g>
 <g>
  <circle cx="403.350" cy="100.100" r="10.800" stroke="#fff" stroke-width="5"/>
  <circle cx="403.350" cy="100.100" r="10.650" stroke="#f92f6e" stroke-width="1.500"/>
 </g>
 <g>
  <circle cx="861.950" cy="27.400" r="10.800" stroke="#fff" stroke-width="5"/>
  <circle cx="861.950" cy="27.400" r="10.650" stroke="#f92f6e" stroke-width="1.500"/>
 </g>
 <g>
  <circle cx="810.900" cy="131.800" r="10.800" stroke="#fff" stroke-width="5"/>
  <circle cx="810.900" cy="131.800" r="10.650" stroke="#f92f6e" stroke-width="1.500"/>
 </g>
</svg>
<div class="t dg" style="left:4.30px;top:64.50px">1</div>
<div class="t dg" style="left:391.35px;top:89.00px">2</div>
<div class="t dg" style="left:849.95px;top:16.30px">3</div>
<div class="t dg" style="left:798.90px;top:120.70px">4</div>
<!--/ANNOT-->
</div>
</body>
</html>
